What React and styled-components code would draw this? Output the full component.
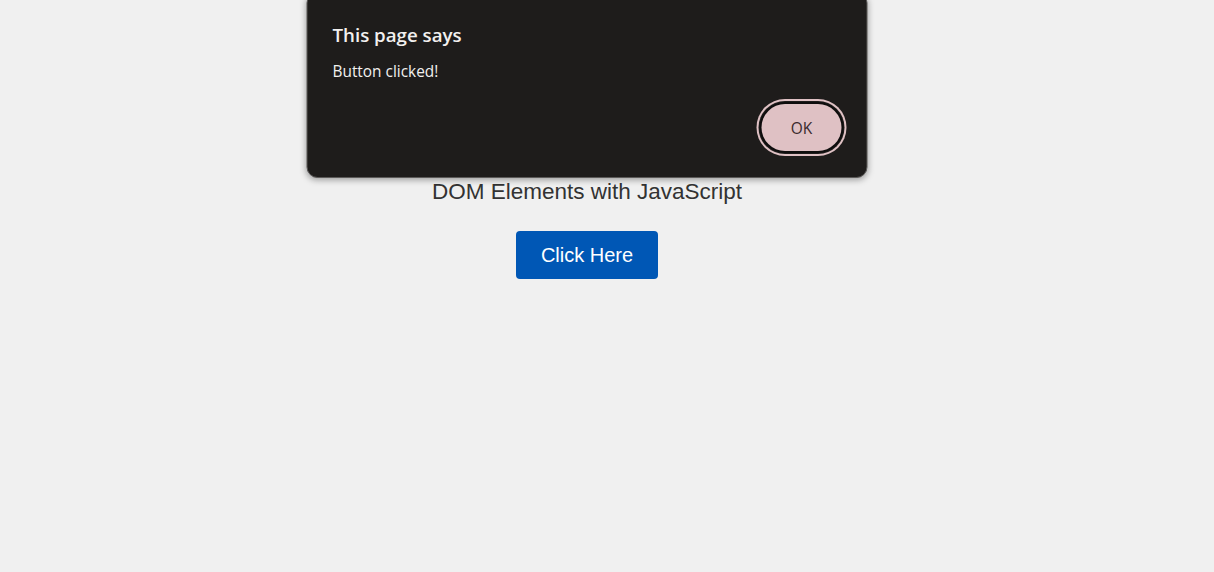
import styled, { createGlobalStyle } from "styled-components";

const GlobalStyle = createGlobalStyle`
  html, body {
    margin: 0;
    padding: 0;
    background: #f0f0f0;
  }
  body {
    font-family: "Liberation Sans", Arial, sans-serif;
    overflow: hidden;
  }
`;

const Page = styled.div`
  position: relative;
  width: 1174px;
  height: 572px;
  display: flex;
  flex-direction: column;
  align-items: center;
  padding-top: 179px;
  box-sizing: border-box;
`;

const Heading = styled.h2`
  margin: 0;
  font-size: 22.5px;
  line-height: 26px;
  font-weight: 400;
  color: #333333;
`;

const ActionButton = styled.button`
  margin-top: 26px;
  width: 142px;
  height: 48px;
  border: none;
  border-radius: 4px;
  background: #0057b5;
  color: #ffffff;
  font-family: "Liberation Sans", Arial, sans-serif;
  font-size: 20px;
  cursor: pointer;
`;

const Dialog = styled.div`
  position: absolute;
  top: -8px;
  left: 50%;
  transform: translateX(-50%);
  width: 561px;
  height: 186px;
  box-sizing: border-box;
  background: #1e1c1b;
  border: 1px solid #5c5a59;
  border-radius: 11px;
  box-shadow: 0 2px 6px rgba(0, 0, 0, 0.35);
  padding: 29px 25px 0 25px;
  display: flex;
  flex-direction: column;
  font-family: "Open Sans", "Noto Sans", sans-serif;
`;

const DialogTitle = styled.div`
  font-size: 18.7px;
  font-weight: 600;
  line-height: 26px;
  color: #f2f0ef;
`;

const DialogMessage = styled.div`
  margin-top: 13px;
  font-size: 15.4px;
  line-height: 22px;
  color: #f2f0ef;
`;

const DialogFooter = styled.div`
  display: flex;
  justify-content: flex-end;
  margin-top: 21px;
`;

const OkButton = styled.button`
  width: 80px;
  height: 47px;
  border: none;
  border-radius: 24px;
  background: #dfc1c4;
  color: #3a2a2d;
  font-family: "Open Sans", "Noto Sans", sans-serif;
  font-size: 15.5px;
  font-weight: 500;
  box-shadow: 0 0 0 2px #0e0d0d, 0 0 0 3px #1e1c1b, 0 0 0 5px #dfc1c4;
  cursor: pointer;
`;

export default function App() {
  const handleClick = () => {};

  return (
    <>
      <GlobalStyle />
      <Page>
        <Heading>DOM Elements with JavaScript</Heading>
        <ActionButton onClick={handleClick}>Click Here</ActionButton>
        <Dialog role="alertdialog">
          <DialogTitle>This page says</DialogTitle>
          <DialogMessage>Button clicked!</DialogMessage>
          <DialogFooter>
            <OkButton>OK</OkButton>
          </DialogFooter>
        </Dialog>
      </Page>
    </>
  );
}
